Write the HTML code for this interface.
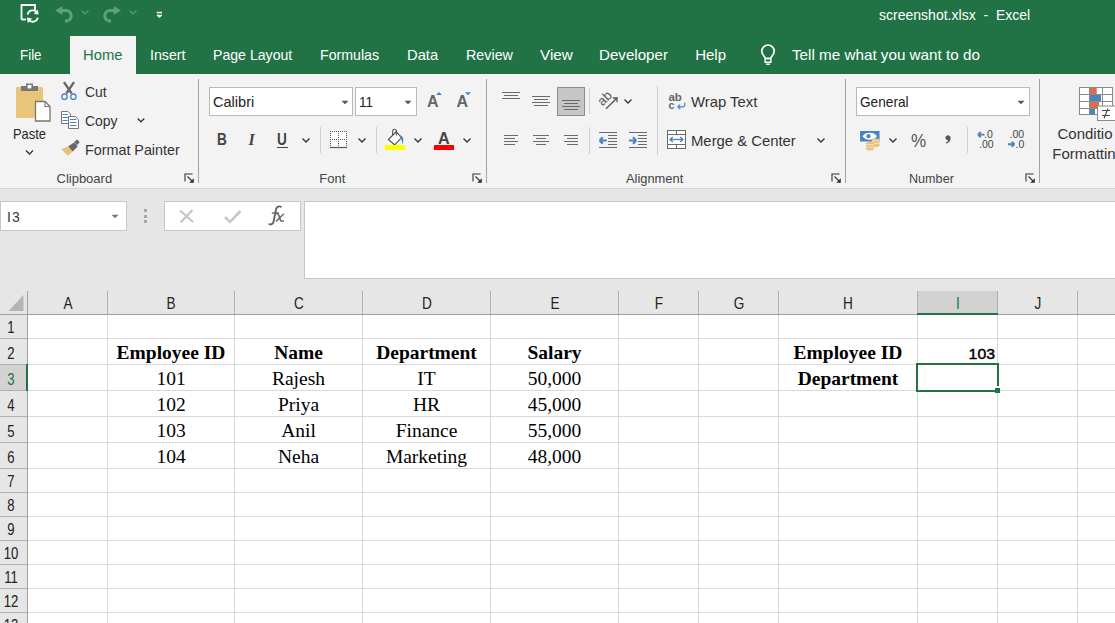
<!DOCTYPE html>
<html><head><meta charset="utf-8"><style>
html,body{margin:0;padding:0;}
body{width:1115px;height:623px;overflow:hidden;position:relative;background:#fff;font-family:"Liberation Sans",sans-serif;}
.t{position:absolute;white-space:nowrap;}
.r{position:absolute;}
svg.r{overflow:visible;}
</style></head><body>
<div class="r" style="left:0px;top:0px;width:1115px;height:74px;background:#217346"></div>
<svg class="r" style="left:18px;top:2px" width="24" height="22" viewBox="0 0 24 22">
<path d="M3.5 17.5 V3 H17 V8" fill="none" stroke="#fff" stroke-width="1.8"/>
<path d="M3.5 17.5 H8" fill="none" stroke="#fff" stroke-width="1.8"/>
<path d="M9.6 12.6 A5.2 5.2 0 0 1 19.2 11" fill="none" stroke="#fff" stroke-width="1.8"/>
<path d="M19.8 7.5 L20.6 12.6 L15.8 12" fill="#fff"/>
<path d="M19.8 15.6 A5.2 5.2 0 0 1 10.4 17.4" fill="none" stroke="#fff" stroke-width="1.8"/>
<path d="M9.8 21.2 L9 15.6 L14 16.4" fill="#fff"/>
</svg>
<svg class="r" style="left:54px;top:4px" width="22" height="20" viewBox="0 0 22 20">
<path d="M7.5 6.4 H12 A5.3 5.3 0 0 1 12 17 H11" fill="none" stroke="#5fa07a" stroke-width="3"/>
<path d="M1.2 6.4 L8.4 1.9 L8.4 10.9 Z" fill="#5fa07a"/>
</svg>
<svg class="r" style="left:80px;top:8px" width="10" height="8" viewBox="0 0 10 8"><path d="M1.5 2.5 L5 6 L8.5 2.5" fill="none" stroke="#5c9c76" stroke-width="1.1"/></svg>
<svg class="r" style="left:101px;top:4px" width="22" height="20" viewBox="0 0 22 20">
<path d="M13.5 6.4 H9 A5.3 5.3 0 0 0 9 17 H10" fill="none" stroke="#5fa07a" stroke-width="3"/>
<path d="M20 6.4 L12.8 1.9 L12.8 10.9 Z" fill="#5fa07a"/>
</svg>
<svg class="r" style="left:128px;top:8px" width="10" height="8" viewBox="0 0 10 8"><path d="M1.5 2.5 L5 6 L8.5 2.5" fill="none" stroke="#5c9c76" stroke-width="1.1"/></svg>
<svg class="r" style="left:155px;top:10px" width="9" height="10" viewBox="0 0 9 10"><rect x="1.8" y="1.8" width="5.2" height="1.5" fill="#fff"/><path d="M1.8 4.7 H7 V5.5 L4.4 8 L1.8 5.5 Z" fill="#fff"/></svg>
<div class="t" style="left:878.5px;top:7.30px;font-size:15px;line-height:15px;color:#fff;font-family:'Liberation Sans', sans-serif;font-weight:normal;transform:scaleX(0.935);transform-origin:0 0;">screenshot.xlsx&nbsp;&nbsp;-&nbsp;&nbsp;Excel</div>
<div class="r" style="left:70px;top:36px;width:66px;height:38px;background:#f3f3f3"></div>
<div class="t" style="left:19.6px;top:47.30px;font-size:15px;line-height:15px;color:#ffffff;font-family:'Liberation Sans', sans-serif;font-weight:normal;transform:scaleX(0.892);transform-origin:0 0;">File</div>
<div class="t" style="left:82.6px;top:47.30px;font-size:15px;line-height:15px;color:#217346;font-family:'Liberation Sans', sans-serif;font-weight:normal;transform:scaleX(0.985);transform-origin:0 0;">Home</div>
<div class="t" style="left:150px;top:47.30px;font-size:15px;line-height:15px;color:#ffffff;font-family:'Liberation Sans', sans-serif;font-weight:normal;transform:scaleX(0.947);transform-origin:0 0;">Insert</div>
<div class="t" style="left:213px;top:47.30px;font-size:15px;line-height:15px;color:#ffffff;font-family:'Liberation Sans', sans-serif;font-weight:normal;transform:scaleX(0.941);transform-origin:0 0;">Page Layout</div>
<div class="t" style="left:320.2px;top:47.30px;font-size:15px;line-height:15px;color:#ffffff;font-family:'Liberation Sans', sans-serif;font-weight:normal;transform:scaleX(0.944);transform-origin:0 0;">Formulas</div>
<div class="t" style="left:407.4px;top:47.30px;font-size:15px;line-height:15px;color:#ffffff;font-family:'Liberation Sans', sans-serif;font-weight:normal;transform:scaleX(0.981);transform-origin:0 0;">Data</div>
<div class="t" style="left:466.4px;top:47.30px;font-size:15px;line-height:15px;color:#ffffff;font-family:'Liberation Sans', sans-serif;font-weight:normal;transform:scaleX(0.955);transform-origin:0 0;">Review</div>
<div class="t" style="left:540px;top:47.30px;font-size:15px;line-height:15px;color:#ffffff;font-family:'Liberation Sans', sans-serif;font-weight:normal;transform:scaleX(1.019);transform-origin:0 0;">View</div>
<div class="t" style="left:599.4px;top:47.30px;font-size:15px;line-height:15px;color:#ffffff;font-family:'Liberation Sans', sans-serif;font-weight:normal;transform:scaleX(1.009);transform-origin:0 0;">Developer</div>
<div class="t" style="left:695.2px;top:47.30px;font-size:15px;line-height:15px;color:#ffffff;font-family:'Liberation Sans', sans-serif;font-weight:normal;">Help</div>
<div class="t" style="left:792.4px;top:47.30px;font-size:15px;line-height:15px;color:#ffffff;font-family:'Liberation Sans', sans-serif;font-weight:normal;transform:scaleX(1.015);transform-origin:0 0;">Tell me what you want to do</div>
<svg class="r" style="left:758px;top:42px" width="22" height="26" viewBox="0 0 22 26">
<path d="M7.5 16.5 C6.5 14 3.8 12.5 3.8 9.2 A6.2 6.2 0 0 1 16.2 9.2 C16.2 12.5 13.5 14 12.5 16.5 Z" fill="none" stroke="#fff" stroke-width="1.7"/>
<rect x="7.2" y="16.5" width="5.6" height="3.8" fill="none" stroke="#fff" stroke-width="1.5"/>
<rect x="8" y="21.6" width="4" height="1.4" fill="#fff"/>
</svg>
<div class="r" style="left:0px;top:74px;width:1115px;height:114px;background:#f3f3f3"></div>
<div class="r" style="left:0px;top:188px;width:1115px;height:1px;background:#d6d6d6"></div>
<div class="r" style="left:198px;top:79px;width:1px;height:104px;background:#a3a3a3"></div>
<div class="r" style="left:486px;top:79px;width:1px;height:104px;background:#a3a3a3"></div>
<div class="r" style="left:845px;top:79px;width:1px;height:104px;background:#a3a3a3"></div>
<div class="r" style="left:1039px;top:79px;width:1px;height:104px;background:#a3a3a3"></div>
<svg class="r" style="left:13px;top:80px" width="40" height="44" viewBox="0 0 40 44">
<rect x="3" y="7" width="27" height="31" rx="1.5" fill="#ebc47c"/>
<path d="M8 11 V6 H13 V3.5 H20 V6 H25 V11 Z" fill="#777"/>
<rect x="14.6" y="5" width="3.8" height="3.4" fill="#fff"/>
<path d="M22.5 21.5 H32 L37 26.5 V41 H22.5 Z" fill="#fff" stroke="#777" stroke-width="1.3"/>
<path d="M32 21.5 V26.5 H37" fill="none" stroke="#777" stroke-width="1.1"/>
</svg>
<div class="t" style="left:13.3px;top:126.30px;font-size:15px;line-height:15px;color:#262626;font-family:'Liberation Sans', sans-serif;font-weight:normal;transform:scaleX(0.86);transform-origin:0 0;">Paste</div>
<svg class="r" style="left:24px;top:148px" width="11" height="9" viewBox="0 0 11 9"><path d="M2 2.5 L5.5 6 L9 2.5" fill="none" stroke="#333" stroke-width="1.3"/></svg>
<svg class="r" style="left:59px;top:80px" width="20" height="22" viewBox="0 0 20 22">
<path d="M5 2.2 L12.6 13.4 M15 2.2 L7.4 13.4" stroke="#666" stroke-width="2.4" fill="none"/>
<circle cx="5.5" cy="16.7" r="2.7" fill="none" stroke="#4a82c3" stroke-width="1.3"/>
<circle cx="14.4" cy="16.7" r="2.7" fill="none" stroke="#4a82c3" stroke-width="1.3"/>
</svg>
<div class="t" style="left:84.5px;top:84.30px;font-size:15px;line-height:15px;color:#333;font-family:'Liberation Sans', sans-serif;font-weight:normal;transform:scaleX(0.93);transform-origin:0 0;">Cut</div>
<svg class="r" style="left:59px;top:109px" width="22" height="22" viewBox="0 0 22 22">
<path d="M2.5 2.5 H9 L11.5 5 V14.5 H2.5 Z" fill="#fff" stroke="#777" stroke-width="1"/>
<path d="M3.5 5.5 H9 M3.5 8.5 H9 M3.5 11.5 H8.5" stroke="#4a82c3" stroke-width="1"/>
<path d="M9.5 7.5 H16.5 L19.5 10.5 V19.5 H9.5 Z" fill="#fff" stroke="#777" stroke-width="1"/>
<path d="M11 10.5 H17.5 M11 13.5 H17.5 M11 16.5 H17.5" stroke="#4a82c3" stroke-width="1"/>
</svg>
<div class="t" style="left:84.5px;top:113.10px;font-size:15px;line-height:15px;color:#333;font-family:'Liberation Sans', sans-serif;font-weight:normal;transform:scaleX(0.93);transform-origin:0 0;">Copy</div>
<svg class="r" style="left:136px;top:116px" width="10" height="9" viewBox="0 0 10 9"><path d="M1.7 2.5 L5 5.8 L8.3 2.5" fill="none" stroke="#333" stroke-width="1.3"/></svg>
<svg class="r" style="left:59px;top:139px" width="22" height="20" viewBox="0 0 22 20">
<path d="M2.3 10.2 L9.8 7 L14 12.3 L8.8 16.8 Z" fill="#e9c07a"/>
<path d="M9.3 7.2 L15.5 3.3 L18.6 7.6 L13.6 12.4 Z" fill="#686868"/>
<path d="M15.2 2.6 L18.6 0.6 L20.6 3.2 L18 6.2 Z" fill="#686868"/>
</svg>
<div class="t" style="left:84.5px;top:142.00px;font-size:15px;line-height:15px;color:#333;font-family:'Liberation Sans', sans-serif;font-weight:normal;transform:scaleX(0.955);transform-origin:0 0;">Format Painter</div>
<div class="t" style="left:56.5px;top:172.00px;font-size:13px;line-height:13px;color:#444;font-family:'Liberation Sans', sans-serif;font-weight:normal;">Clipboard</div>
<svg class="r" style="left:183.5px;top:172.5px" width="11" height="11" viewBox="0 0 11 11"><path d="M1 8.5 V1 H8.5" fill="none" stroke="#333" stroke-width="1.1"/><path d="M3.5 3.5 L9 9" stroke="#333" stroke-width="1.1"/><path d="M9.8 5.2 V9.8 H5.2 Z" fill="#333"/></svg>
<div class="r" style="left:209px;top:87px;width:144px;height:29px;background:#fff;border:1px solid #b9b9b9;box-sizing:border-box"></div>
<div class="t" style="left:212.6px;top:94.00px;font-size:15px;line-height:15px;color:#222;font-family:'Liberation Sans', sans-serif;font-weight:normal;transform:scaleX(0.97);transform-origin:0 0;">Calibri</div>
<svg class="r" style="left:340.5px;top:99.5px" width="8" height="5" viewBox="0 0 8 5"><path d="M0.5 0.8 H7.5 L4 4.3 Z" fill="#555"/></svg>
<div class="r" style="left:355px;top:87px;width:62px;height:29px;background:#fff;border:1px solid #b9b9b9;box-sizing:border-box"></div>
<div class="t" style="left:359.4px;top:94.00px;font-size:15px;line-height:15px;color:#222;font-family:'Liberation Sans', sans-serif;font-weight:normal;transform:scaleX(0.9);transform-origin:0 0;">11</div>
<svg class="r" style="left:404px;top:99.5px" width="8" height="5" viewBox="0 0 8 5"><path d="M0.5 0.8 H7.5 L4 4.3 Z" fill="#555"/></svg>
<svg class="r" style="left:426px;top:90px" width="16" height="20" viewBox="0 0 16 20"><text x="1" y="16.8" font-family="Liberation Sans" font-size="16" font-weight="bold" fill="#666">A</text><path d="M10 5 L13 2 L16 5 Z" fill="#4a82c3"/></svg>
<svg class="r" style="left:455px;top:90px" width="16" height="20" viewBox="0 0 16 20"><text x="1.5" y="16.8" font-family="Liberation Sans" font-size="16" font-weight="bold" fill="#666">A</text><path d="M10 2.2 H16 L13 5.2 Z" fill="#4a82c3"/></svg>
<div class="t" style="left:217.3px;top:132.46px;font-size:16px;line-height:16px;color:#444;font-family:'Liberation Sans', sans-serif;font-weight:bold;transform:scaleX(0.85);transform-origin:0 0;">B</div>
<div class="t" style="left:248.5px;top:132.46px;font-size:16px;line-height:16px;color:#444;font-family:'Liberation Sans', sans-serif;font-weight:bold;font-family:'Liberation Serif',serif;"><i>I</i></div>
<div class="t" style="left:277px;top:132.46px;font-size:16px;line-height:16px;color:#444;font-family:'Liberation Sans', sans-serif;font-weight:bold;transform:scaleX(0.85);transform-origin:0 0;">U</div>
<div class="r" style="left:277px;top:147px;width:11px;height:1px;background:#444"></div>
<svg class="r" style="left:300.5px;top:136.5px" width="10" height="7" viewBox="0 0 10 7"><path d="M1.5 1.5 L5 5 L8.5 1.5" fill="none" stroke="#333" stroke-width="1.3"/></svg>
<div class="r" style="left:320px;top:127px;width:1px;height:26px;background:#d0d0d0"></div>
<svg class="r" style="left:329px;top:130px" width="20" height="20" viewBox="0 0 20 20">
<rect x="1.5" y="1.5" width="16" height="15.5" fill="#fff"/>
<path d="M1.5 1 V17 M17.5 1 V17 M9.5 1 V17 M1 1.5 H18 M1 9.5 H18" fill="none" stroke="#555" stroke-width="1" stroke-dasharray="1 1" shape-rendering="crispEdges"/>
<path d="M1 17.5 H18" stroke="#555" stroke-width="1.2"/>
</svg>
<svg class="r" style="left:356.5px;top:136.5px" width="10" height="7" viewBox="0 0 10 7"><path d="M1.5 1.5 L5 5 L8.5 1.5" fill="none" stroke="#333" stroke-width="1.3"/></svg>
<div class="r" style="left:376px;top:127px;width:1px;height:26px;background:#d0d0d0"></div>
<svg class="r" style="left:384px;top:127px" width="24" height="24" viewBox="0 0 24 24">
<path d="M4.4 12.5 L10.6 17.8 L17.6 10.6 L12.3 4.8 Z" fill="#fff" stroke="#555" stroke-width="1.2" stroke-linejoin="round"/>
<path d="M8.6 8 V4.2 A1.9 1.9 0 0 1 12.4 4.2 V8.5" fill="none" stroke="#555" stroke-width="1.1"/>
<path d="M15.2 8.2 C18.8 8.4 20.6 11.5 18.4 17.4 L17.4 12 Z" fill="#4a82c3"/>
<rect x="1" y="18" width="20" height="5" fill="#ffff00"/>
</svg>
<svg class="r" style="left:413px;top:136.5px" width="10" height="7" viewBox="0 0 10 7"><path d="M1.5 1.5 L5 5 L8.5 1.5" fill="none" stroke="#333" stroke-width="1.3"/></svg>
<div class="t" style="left:438px;top:129.61px;font-size:17px;line-height:17px;color:#444;font-family:'Liberation Sans', sans-serif;font-weight:bold;transform:scaleX(0.95);transform-origin:0 0;">A</div>
<div class="r" style="left:434px;top:145px;width:20px;height:5px;background:#ff0000"></div>
<svg class="r" style="left:461.5px;top:136.5px" width="10" height="7" viewBox="0 0 10 7"><path d="M1.5 1.5 L5 5 L8.5 1.5" fill="none" stroke="#333" stroke-width="1.3"/></svg>
<div class="t" style="left:319.3px;top:172.00px;font-size:13px;line-height:13px;color:#444;font-family:'Liberation Sans', sans-serif;font-weight:normal;">Font</div>
<svg class="r" style="left:472px;top:172.5px" width="11" height="11" viewBox="0 0 11 11"><path d="M1 8.5 V1 H8.5" fill="none" stroke="#333" stroke-width="1.1"/><path d="M3.5 3.5 L9 9" stroke="#333" stroke-width="1.1"/><path d="M9.8 5.2 V9.8 H5.2 Z" fill="#333"/></svg>
<div class="r" style="left:502px;top:92px;width:18px;height:1px;background:#6a6a6a"></div>
<div class="r" style="left:504px;top:95px;width:14px;height:1px;background:#6a6a6a"></div>
<div class="r" style="left:502px;top:98px;width:18px;height:1px;background:#6a6a6a"></div>
<div class="r" style="left:532px;top:96px;width:18px;height:1px;background:#6a6a6a"></div>
<div class="r" style="left:534px;top:99px;width:14px;height:1px;background:#6a6a6a"></div>
<div class="r" style="left:532px;top:102px;width:18px;height:1px;background:#6a6a6a"></div>
<div class="r" style="left:534px;top:105px;width:14px;height:1px;background:#6a6a6a"></div>
<div class="r" style="left:557px;top:87px;width:28px;height:29px;background:#c6c6c6;border:1px solid #8c8c8c;box-sizing:border-box"></div>
<div class="r" style="left:562px;top:100px;width:18px;height:1px;background:#6a6a6a"></div>
<div class="r" style="left:564px;top:103px;width:14px;height:1px;background:#6a6a6a"></div>
<div class="r" style="left:562px;top:106px;width:18px;height:1px;background:#6a6a6a"></div>
<div class="r" style="left:564px;top:109px;width:14px;height:1px;background:#6a6a6a"></div>
<div class="r" style="left:589px;top:88px;width:1px;height:26px;background:#d0d0d0"></div>
<svg class="r" style="left:596px;top:90px" width="24" height="21" viewBox="0 0 24 21">
<text x="0" y="0" font-family="Liberation Sans" font-size="13" fill="#5a5a5a" transform="translate(6.6,16.4) rotate(-45)">ab</text>
<path d="M10 18.8 L21 8" stroke="#555" stroke-width="1.3"/>
<path d="M16.8 8 H21 V12.2" fill="none" stroke="#555" stroke-width="1.3"/>
</svg>
<svg class="r" style="left:622.5px;top:97.5px" width="10" height="7" viewBox="0 0 10 7"><path d="M1.5 1.5 L5 5 L8.5 1.5" fill="none" stroke="#333" stroke-width="1.3"/></svg>
<div class="r" style="left:504px;top:135px;width:14px;height:1px;background:#6a6a6a"></div>
<div class="r" style="left:504px;top:138px;width:11px;height:1px;background:#6a6a6a"></div>
<div class="r" style="left:504px;top:141px;width:14px;height:1px;background:#6a6a6a"></div>
<div class="r" style="left:504px;top:144px;width:11px;height:1px;background:#6a6a6a"></div>
<div class="r" style="left:533px;top:135px;width:16px;height:1px;background:#6a6a6a"></div>
<div class="r" style="left:536px;top:138px;width:10px;height:1px;background:#6a6a6a"></div>
<div class="r" style="left:533px;top:141px;width:16px;height:1px;background:#6a6a6a"></div>
<div class="r" style="left:536px;top:144px;width:10px;height:1px;background:#6a6a6a"></div>
<div class="r" style="left:564px;top:135px;width:14px;height:1px;background:#6a6a6a"></div>
<div class="r" style="left:567px;top:138px;width:11px;height:1px;background:#6a6a6a"></div>
<div class="r" style="left:564px;top:141px;width:14px;height:1px;background:#6a6a6a"></div>
<div class="r" style="left:567px;top:144px;width:11px;height:1px;background:#6a6a6a"></div>
<div class="r" style="left:589px;top:127px;width:1px;height:27px;background:#d0d0d0"></div>
<div class="r" style="left:599px;top:132px;width:18px;height:1px;background:#6a6a6a"></div>
<div class="r" style="left:608px;top:135px;width:9px;height:1px;background:#6a6a6a"></div>
<div class="r" style="left:608px;top:138px;width:9px;height:1px;background:#6a6a6a"></div>
<div class="r" style="left:608px;top:141px;width:9px;height:1px;background:#6a6a6a"></div>
<div class="r" style="left:608px;top:144px;width:9px;height:1px;background:#6a6a6a"></div>
<div class="r" style="left:599px;top:147px;width:18px;height:1px;background:#6a6a6a"></div>
<svg class="r" style="left:598px;top:136px" width="10" height="9" viewBox="0 0 10 9"><path d="M1.6 4.5 H8.8 M1.6 4.5 L4.8 1.3 M1.6 4.5 L4.8 7.7" stroke="#4a82c3" stroke-width="2.2" fill="none"/></svg>
<div class="r" style="left:629px;top:132px;width:18px;height:1px;background:#6a6a6a"></div>
<div class="r" style="left:638px;top:135px;width:9px;height:1px;background:#6a6a6a"></div>
<div class="r" style="left:638px;top:138px;width:9px;height:1px;background:#6a6a6a"></div>
<div class="r" style="left:638px;top:141px;width:9px;height:1px;background:#6a6a6a"></div>
<div class="r" style="left:638px;top:144px;width:9px;height:1px;background:#6a6a6a"></div>
<div class="r" style="left:629px;top:147px;width:18px;height:1px;background:#6a6a6a"></div>
<svg class="r" style="left:628px;top:136px" width="10" height="9" viewBox="0 0 10 9"><path d="M1 4.5 H8.2 M8.2 4.5 L5 1.3 M8.2 4.5 L5 7.7" stroke="#4a82c3" stroke-width="2.2" fill="none"/></svg>
<div class="r" style="left:657px;top:86px;width:1px;height:69px;background:#d0d0d0"></div>
<svg class="r" style="left:668px;top:92px" width="20" height="18" viewBox="0 0 20 18">
<text x="0.6" y="8.6" font-family="Liberation Sans" font-size="11.5" font-weight="bold" fill="#666" letter-spacing="-0.2">ab</text>
<text x="0.6" y="16.6" font-family="Liberation Sans" font-size="10.5" font-weight="bold" fill="#666">c</text>
<path d="M16.8 10.6 V12.6 A2.2 2.2 0 0 1 14.6 14.8 H10" fill="none" stroke="#4a82c3" stroke-width="1.2"/>
<path d="M12.2 12.6 L9.8 14.8 L12.2 17" fill="none" stroke="#4a82c3" stroke-width="1.2"/>
</svg>
<div class="t" style="left:690.9px;top:94.00px;font-size:15px;line-height:15px;color:#333;font-family:'Liberation Sans', sans-serif;font-weight:normal;transform:scaleX(0.99);transform-origin:0 0;">Wrap Text</div>
<svg class="r" style="left:666px;top:129px" width="22" height="21" viewBox="0 0 22 21">
<rect x="1.5" y="1.5" width="18" height="18" fill="#fff" stroke="#6a6a6a" stroke-width="1"/>
<path d="M1.5 5.5 H19.5 M1.5 15.5 H19.5 M10.5 1.5 V5.5 M10.5 15.5 V19.5" stroke="#6a6a6a" stroke-width="1"/>
<path d="M4.2 10.5 H16.8" stroke="#4a82c3" stroke-width="1.3"/>
<path d="M6.8 8 L4.2 10.5 L6.8 13 M14.2 8 L16.8 10.5 L14.2 13" fill="none" stroke="#4a82c3" stroke-width="1.5"/>
</svg>
<div class="t" style="left:691.4px;top:133.30px;font-size:15px;line-height:15px;color:#333;font-family:'Liberation Sans', sans-serif;font-weight:normal;transform:scaleX(0.99);transform-origin:0 0;">Merge &amp; Center</div>
<svg class="r" style="left:815.5px;top:136.5px" width="10" height="7" viewBox="0 0 10 7"><path d="M1.5 1.5 L5 5 L8.5 1.5" fill="none" stroke="#333" stroke-width="1.3"/></svg>
<div class="t" style="left:626.4px;top:172.00px;font-size:13px;line-height:13px;color:#444;font-family:'Liberation Sans', sans-serif;font-weight:normal;transform:scaleX(0.99);transform-origin:0 0;">Alignment</div>
<svg class="r" style="left:831px;top:172.5px" width="11" height="11" viewBox="0 0 11 11"><path d="M1 8.5 V1 H8.5" fill="none" stroke="#333" stroke-width="1.1"/><path d="M3.5 3.5 L9 9" stroke="#333" stroke-width="1.1"/><path d="M9.8 5.2 V9.8 H5.2 Z" fill="#333"/></svg>
<div class="r" style="left:856px;top:87px;width:174px;height:29px;background:#fff;border:1px solid #b9b9b9;box-sizing:border-box"></div>
<div class="t" style="left:859.7px;top:94.00px;font-size:15px;line-height:15px;color:#222;font-family:'Liberation Sans', sans-serif;font-weight:normal;transform:scaleX(0.91);transform-origin:0 0;">General</div>
<svg class="r" style="left:1017px;top:99.5px" width="8" height="5" viewBox="0 0 8 5"><path d="M0.5 0.8 H7.5 L4 4.3 Z" fill="#555"/></svg>
<svg class="r" style="left:858px;top:129px" width="24" height="23" viewBox="0 0 24 23">
<rect x="2" y="2" width="19.5" height="10.5" fill="#4a82c3"/>
<path d="M4.5 7.2 Q7 3.8 11.8 3.8 Q16.5 3.8 19 7.2 Q16.5 10.7 11.8 10.7 Q7 10.7 4.5 7.2 Z" fill="#fff"/>
<circle cx="10.5" cy="7.2" r="2.1" fill="#4a82c3"/>
<rect x="14" y="9.5" width="7.5" height="8.5" rx="2" fill="#ebc17c"/>
<path d="M14 12 H21.5 M14 14.5 H21.5" stroke="#f8e6c4" stroke-width="0.9"/>
<rect x="8" y="13" width="8" height="8.5" rx="2" fill="#ebc17c"/>
<path d="M8 15.6 H16 M8 18.2 H16" stroke="#f8e6c4" stroke-width="0.9"/>
</svg>
<svg class="r" style="left:887.5px;top:136.5px" width="10" height="7" viewBox="0 0 10 7"><path d="M1.5 1.5 L5 5 L8.5 1.5" fill="none" stroke="#333" stroke-width="1.3"/></svg>
<div class="t" style="left:911px;top:131.76px;font-size:18px;line-height:18px;color:#555;font-family:'Liberation Sans', sans-serif;font-weight:normal;transform:scaleX(0.95);transform-origin:0 0;">%</div>
<svg class="r" style="left:943px;top:133px" width="10" height="12" viewBox="0 0 10 12"><path d="M4.2 2.5 A2.6 2.6 0 0 1 7.6 5.2 C7.6 7.8 6 9.6 3.2 10.6 L2.7 9.6 C4.3 8.8 5 7.8 5.1 6.9 A2.2 2.2 0 0 1 4.2 2.5 Z" fill="#555"/></svg>
<div class="r" style="left:967px;top:127px;width:1px;height:26px;background:#d0d0d0"></div>
<svg class="r" style="left:976px;top:130px" width="20" height="20" viewBox="0 0 20 20">
<path d="M2 4.6 H8.5 M2 4.6 L4.8 2 M2 4.6 L4.8 7.2" stroke="#4a82c3" stroke-width="1.9" fill="none"/>
<text x="8" y="8.2" font-family="Liberation Sans" font-size="10.5" fill="#444">.0</text>
<text x="3" y="18.2" font-family="Liberation Sans" font-size="10.5" fill="#444">.00</text>
</svg>
<svg class="r" style="left:1006px;top:130px" width="20" height="20" viewBox="0 0 20 20">
<text x="3.5" y="8.2" font-family="Liberation Sans" font-size="10.5" fill="#444">.00</text>
<path d="M2 14.2 H8.5 M8.5 14.2 L5.7 11.6 M8.5 14.2 L5.7 16.8" stroke="#4a82c3" stroke-width="1.9" fill="none"/>
<text x="9.5" y="18.2" font-family="Liberation Sans" font-size="10.5" fill="#444">.0</text>
</svg>
<div class="t" style="left:908.6px;top:172.00px;font-size:13px;line-height:13px;color:#444;font-family:'Liberation Sans', sans-serif;font-weight:normal;transform:scaleX(0.97);transform-origin:0 0;">Number</div>
<svg class="r" style="left:1025px;top:172.5px" width="11" height="11" viewBox="0 0 11 11"><path d="M1 8.5 V1 H8.5" fill="none" stroke="#333" stroke-width="1.1"/><path d="M3.5 3.5 L9 9" stroke="#333" stroke-width="1.1"/><path d="M9.8 5.2 V9.8 H5.2 Z" fill="#333"/></svg>
<svg class="r" style="left:1078px;top:86px" width="40" height="36" viewBox="0 0 40 36">
<rect x="1.5" y="1.5" width="33" height="27" fill="#fff" stroke="#8a8a8a" stroke-width="1"/>
<rect x="11.5" y="2" width="7.2" height="6.5" fill="#e06c4a"/>
<rect x="11.5" y="8.5" width="11.5" height="7" fill="#4a82c3"/>
<rect x="11.5" y="15.5" width="9.5" height="7" fill="#e06c4a"/>
<rect x="11.5" y="22.5" width="5.5" height="6" fill="#4a82c3"/>
<path d="M1.5 8.5 H34.5 M1.5 15.5 H34.5 M1.5 22.5 H34.5 M11.5 1.5 V28.5 M24.5 1.5 V28.5" stroke="#8a8a8a" stroke-width="1"/>
<rect x="19.5" y="20" width="22" height="14.5" fill="#fff" stroke="#8a8a8a" stroke-width="1"/>
<path d="M24 24.5 H32 M24 29.5 H32 M26 32.5 L30 22.5" stroke="#444" stroke-width="1.1" fill="none"/>
</svg>
<div class="t" style="left:1057.5px;top:126.30px;font-size:15px;line-height:15px;color:#333;font-family:'Liberation Sans', sans-serif;font-weight:normal;width:55px;overflow:hidden;">Conditional</div>
<div class="t" style="left:1052.3px;top:146.00px;font-size:15px;line-height:15px;color:#333;font-family:'Liberation Sans', sans-serif;font-weight:normal;">Formatting</div>
<div class="r" style="left:0px;top:189px;width:1115px;height:102px;background:#e6e6e6"></div>
<div class="r" style="left:0px;top:201px;width:127px;height:30px;background:#fff;border:1px solid #c6c6c6;box-sizing:border-box"></div>
<div class="t" style="left:7px;top:208.88px;font-size:15.5px;line-height:15.5px;color:#333;font-family:'Liberation Sans', sans-serif;font-weight:normal;transform:scaleX(0.9);transform-origin:0 0;letter-spacing:1.3px;">I3</div>
<svg class="r" style="left:110.5px;top:213.5px" width="8" height="5" viewBox="0 0 8 5"><path d="M0.5 0.8 H7.5 L4 4.3 Z" fill="#777"/></svg>
<div class="r" style="left:144px;top:209px;width:3px;height:3px;background:#a6a6a6"></div>
<div class="r" style="left:144px;top:214.5px;width:3px;height:3px;background:#a6a6a6"></div>
<div class="r" style="left:144px;top:220px;width:3px;height:3px;background:#a6a6a6"></div>
<div class="r" style="left:164px;top:201px;width:137px;height:30px;background:#fff;border:1px solid #c6c6c6;box-sizing:border-box"></div>
<svg class="r" style="left:178px;top:208px" width="18" height="17" viewBox="0 0 18 17"><path d="M2 2.5 L15 14 M14.5 2 L2.5 14.5" stroke="#c4c4c4" stroke-width="1.9"/></svg>
<svg class="r" style="left:223px;top:208px" width="20" height="17" viewBox="0 0 20 17"><path d="M2 9 L7 14 L17.5 3" fill="none" stroke="#c8c8c8" stroke-width="2.6"/></svg>
<svg class="r" style="left:266px;top:204px" width="20" height="22" viewBox="0 0 20 22"><path d="M15.5 3.2 C13 1.5 10.6 2.6 10 5.5 L7.6 17.5 C7 20.2 5 21.2 2.6 19.8" fill="none" stroke="#666" stroke-width="1.9"/><path d="M5.8 9 H13" stroke="#666" stroke-width="1.4"/><path d="M9.5 9.8 C11.5 9 12.6 10 13.2 12.5 L14.3 15.8 C14.8 17.4 16.3 17.6 18 16.6" fill="none" stroke="#666" stroke-width="1.6"/><path d="M17.8 9.8 L10 17.4" stroke="#666" stroke-width="1.4"/></svg>
<div class="r" style="left:304px;top:201px;width:811px;height:78px;background:#fff;border:1px solid #c6c6c6;border-right:none;box-sizing:border-box"></div>
<div class="r" style="left:0px;top:315px;width:1115px;height:308px;background:#fff"></div>
<div class="r" style="left:0px;top:291px;width:1115px;height:23px;background:#e6e6e6"></div>
<div class="r" style="left:0px;top:315px;width:27px;height:308px;background:#e6e6e6"></div>
<div class="r" style="left:918px;top:291px;width:79px;height:23px;background:#d2d2d2"></div>
<div class="r" style="left:0px;top:365px;width:27px;height:25px;background:#d2d2d2"></div>
<div class="r" style="left:107px;top:315px;width:1px;height:308px;background:#d9d9d9"></div>
<div class="r" style="left:234px;top:315px;width:1px;height:308px;background:#d9d9d9"></div>
<div class="r" style="left:362px;top:315px;width:1px;height:308px;background:#d9d9d9"></div>
<div class="r" style="left:490px;top:315px;width:1px;height:308px;background:#d9d9d9"></div>
<div class="r" style="left:618px;top:315px;width:1px;height:308px;background:#d9d9d9"></div>
<div class="r" style="left:698px;top:315px;width:1px;height:308px;background:#d9d9d9"></div>
<div class="r" style="left:778px;top:315px;width:1px;height:308px;background:#d9d9d9"></div>
<div class="r" style="left:917px;top:315px;width:1px;height:308px;background:#d9d9d9"></div>
<div class="r" style="left:997px;top:315px;width:1px;height:308px;background:#d9d9d9"></div>
<div class="r" style="left:1077px;top:315px;width:1px;height:308px;background:#d9d9d9"></div>
<div class="r" style="left:1157px;top:315px;width:1px;height:308px;background:#d9d9d9"></div>
<div class="r" style="left:27px;top:338px;width:1088px;height:1px;background:#d9d9d9"></div>
<div class="r" style="left:27px;top:364px;width:1088px;height:1px;background:#d9d9d9"></div>
<div class="r" style="left:27px;top:390px;width:1088px;height:1px;background:#d9d9d9"></div>
<div class="r" style="left:27px;top:416px;width:1088px;height:1px;background:#d9d9d9"></div>
<div class="r" style="left:27px;top:442px;width:1088px;height:1px;background:#d9d9d9"></div>
<div class="r" style="left:27px;top:468px;width:1088px;height:1px;background:#d9d9d9"></div>
<div class="r" style="left:27px;top:492px;width:1088px;height:1px;background:#d9d9d9"></div>
<div class="r" style="left:27px;top:516px;width:1088px;height:1px;background:#d9d9d9"></div>
<div class="r" style="left:27px;top:540px;width:1088px;height:1px;background:#d9d9d9"></div>
<div class="r" style="left:27px;top:564px;width:1088px;height:1px;background:#d9d9d9"></div>
<div class="r" style="left:27px;top:588px;width:1088px;height:1px;background:#d9d9d9"></div>
<div class="r" style="left:27px;top:612px;width:1088px;height:1px;background:#d9d9d9"></div>
<div class="r" style="left:27px;top:636px;width:1088px;height:1px;background:#d9d9d9"></div>
<div class="r" style="left:0px;top:314px;width:1115px;height:1px;background:#9f9f9f"></div>
<div class="r" style="left:27px;top:291px;width:1px;height:332px;background:#9f9f9f"></div>
<div class="r" style="left:107px;top:291px;width:1px;height:23px;background:#b0b0b0"></div>
<div class="r" style="left:234px;top:291px;width:1px;height:23px;background:#b0b0b0"></div>
<div class="r" style="left:362px;top:291px;width:1px;height:23px;background:#b0b0b0"></div>
<div class="r" style="left:490px;top:291px;width:1px;height:23px;background:#b0b0b0"></div>
<div class="r" style="left:618px;top:291px;width:1px;height:23px;background:#b0b0b0"></div>
<div class="r" style="left:698px;top:291px;width:1px;height:23px;background:#b0b0b0"></div>
<div class="r" style="left:778px;top:291px;width:1px;height:23px;background:#b0b0b0"></div>
<div class="r" style="left:917px;top:291px;width:1px;height:23px;background:#b0b0b0"></div>
<div class="r" style="left:997px;top:291px;width:1px;height:23px;background:#b0b0b0"></div>
<div class="r" style="left:1077px;top:291px;width:1px;height:23px;background:#b0b0b0"></div>
<div class="r" style="left:1157px;top:291px;width:1px;height:23px;background:#b0b0b0"></div>
<div class="r" style="left:0px;top:338px;width:27px;height:1px;background:#b0b0b0"></div>
<div class="r" style="left:0px;top:364px;width:27px;height:1px;background:#b0b0b0"></div>
<div class="r" style="left:0px;top:390px;width:27px;height:1px;background:#b0b0b0"></div>
<div class="r" style="left:0px;top:416px;width:27px;height:1px;background:#b0b0b0"></div>
<div class="r" style="left:0px;top:442px;width:27px;height:1px;background:#b0b0b0"></div>
<div class="r" style="left:0px;top:468px;width:27px;height:1px;background:#b0b0b0"></div>
<div class="r" style="left:0px;top:492px;width:27px;height:1px;background:#b0b0b0"></div>
<div class="r" style="left:0px;top:516px;width:27px;height:1px;background:#b0b0b0"></div>
<div class="r" style="left:0px;top:540px;width:27px;height:1px;background:#b0b0b0"></div>
<div class="r" style="left:0px;top:564px;width:27px;height:1px;background:#b0b0b0"></div>
<div class="r" style="left:0px;top:588px;width:27px;height:1px;background:#b0b0b0"></div>
<div class="r" style="left:0px;top:612px;width:27px;height:1px;background:#b0b0b0"></div>
<div class="r" style="left:0px;top:636px;width:27px;height:1px;background:#b0b0b0"></div>
<div class="r" style="left:917px;top:313px;width:81px;height:2px;background:#217346"></div>
<div class="r" style="left:26px;top:364px;width:2px;height:27px;background:#217346"></div>
<svg class="r" style="left:8px;top:294px" width="17" height="18" viewBox="0 0 17 18"><path d="M15.5 1 V17 H0.5 Z" fill="#b4b4b4"/></svg>
<div class="t" style="left:-432.5px;width:1000px;text-align:center;top:296.46px;font-size:16px;line-height:16px;color:#222;font-family:'Liberation Sans', sans-serif;font-weight:normal;transform:scaleX(0.85);transform-origin:50% 0;">A</div>
<div class="t" style="left:-329.0px;width:1000px;text-align:center;top:296.46px;font-size:16px;line-height:16px;color:#222;font-family:'Liberation Sans', sans-serif;font-weight:normal;transform:scaleX(0.85);transform-origin:50% 0;">B</div>
<div class="t" style="left:-201.5px;width:1000px;text-align:center;top:296.46px;font-size:16px;line-height:16px;color:#222;font-family:'Liberation Sans', sans-serif;font-weight:normal;transform:scaleX(0.85);transform-origin:50% 0;">C</div>
<div class="t" style="left:-73.5px;width:1000px;text-align:center;top:296.46px;font-size:16px;line-height:16px;color:#222;font-family:'Liberation Sans', sans-serif;font-weight:normal;transform:scaleX(0.85);transform-origin:50% 0;">D</div>
<div class="t" style="left:54.5px;width:1000px;text-align:center;top:296.46px;font-size:16px;line-height:16px;color:#222;font-family:'Liberation Sans', sans-serif;font-weight:normal;transform:scaleX(0.85);transform-origin:50% 0;">E</div>
<div class="t" style="left:158.5px;width:1000px;text-align:center;top:296.46px;font-size:16px;line-height:16px;color:#222;font-family:'Liberation Sans', sans-serif;font-weight:normal;transform:scaleX(0.85);transform-origin:50% 0;">F</div>
<div class="t" style="left:238.5px;width:1000px;text-align:center;top:296.46px;font-size:16px;line-height:16px;color:#222;font-family:'Liberation Sans', sans-serif;font-weight:normal;transform:scaleX(0.85);transform-origin:50% 0;">G</div>
<div class="t" style="left:348.0px;width:1000px;text-align:center;top:296.46px;font-size:16px;line-height:16px;color:#222;font-family:'Liberation Sans', sans-serif;font-weight:normal;transform:scaleX(0.85);transform-origin:50% 0;">H</div>
<div class="t" style="left:457.5px;width:1000px;text-align:center;top:296.46px;font-size:16px;line-height:16px;color:#217346;font-family:'Liberation Sans', sans-serif;font-weight:normal;transform:scaleX(0.85);transform-origin:50% 0;">I</div>
<div class="t" style="left:537.5px;width:1000px;text-align:center;top:296.46px;font-size:16px;line-height:16px;color:#222;font-family:'Liberation Sans', sans-serif;font-weight:normal;transform:scaleX(0.85);transform-origin:50% 0;">J</div>
<div class="t" style="left:-489px;width:1000px;text-align:center;top:320.46px;font-size:16px;line-height:16px;color:#222;font-family:'Liberation Sans', sans-serif;font-weight:normal;transform:scaleX(0.82);transform-origin:50% 0;">1</div>
<div class="t" style="left:-489px;width:1000px;text-align:center;top:346.46px;font-size:16px;line-height:16px;color:#222;font-family:'Liberation Sans', sans-serif;font-weight:normal;transform:scaleX(0.82);transform-origin:50% 0;">2</div>
<div class="t" style="left:-489px;width:1000px;text-align:center;top:372.46px;font-size:16px;line-height:16px;color:#217346;font-family:'Liberation Sans', sans-serif;font-weight:normal;transform:scaleX(0.82);transform-origin:50% 0;">3</div>
<div class="t" style="left:-489px;width:1000px;text-align:center;top:398.46px;font-size:16px;line-height:16px;color:#222;font-family:'Liberation Sans', sans-serif;font-weight:normal;transform:scaleX(0.82);transform-origin:50% 0;">4</div>
<div class="t" style="left:-489px;width:1000px;text-align:center;top:424.46px;font-size:16px;line-height:16px;color:#222;font-family:'Liberation Sans', sans-serif;font-weight:normal;transform:scaleX(0.82);transform-origin:50% 0;">5</div>
<div class="t" style="left:-489px;width:1000px;text-align:center;top:450.46px;font-size:16px;line-height:16px;color:#222;font-family:'Liberation Sans', sans-serif;font-weight:normal;transform:scaleX(0.82);transform-origin:50% 0;">6</div>
<div class="t" style="left:-489px;width:1000px;text-align:center;top:474.46px;font-size:16px;line-height:16px;color:#222;font-family:'Liberation Sans', sans-serif;font-weight:normal;transform:scaleX(0.82);transform-origin:50% 0;">7</div>
<div class="t" style="left:-489px;width:1000px;text-align:center;top:498.46px;font-size:16px;line-height:16px;color:#222;font-family:'Liberation Sans', sans-serif;font-weight:normal;transform:scaleX(0.82);transform-origin:50% 0;">8</div>
<div class="t" style="left:-489px;width:1000px;text-align:center;top:522.46px;font-size:16px;line-height:16px;color:#222;font-family:'Liberation Sans', sans-serif;font-weight:normal;transform:scaleX(0.82);transform-origin:50% 0;">9</div>
<div class="t" style="left:-489px;width:1000px;text-align:center;top:546.46px;font-size:16px;line-height:16px;color:#222;font-family:'Liberation Sans', sans-serif;font-weight:normal;transform:scaleX(0.82);transform-origin:50% 0;">10</div>
<div class="t" style="left:-489px;width:1000px;text-align:center;top:570.46px;font-size:16px;line-height:16px;color:#222;font-family:'Liberation Sans', sans-serif;font-weight:normal;transform:scaleX(0.82);transform-origin:50% 0;">11</div>
<div class="t" style="left:-489px;width:1000px;text-align:center;top:594.46px;font-size:16px;line-height:16px;color:#222;font-family:'Liberation Sans', sans-serif;font-weight:normal;transform:scaleX(0.82);transform-origin:50% 0;">12</div>
<div class="t" style="left:-489px;width:1000px;text-align:center;top:618.46px;font-size:16px;line-height:16px;color:#222;font-family:'Liberation Sans', sans-serif;font-weight:normal;transform:scaleX(0.82);transform-origin:50% 0;">13</div>
<div class="t" style="left:-329.0px;width:1000px;text-align:center;top:342.67px;font-size:19.5px;line-height:19.5px;color:#000;font-family:'Liberation Serif', serif;font-weight:bold;">Employee ID</div>
<div class="t" style="left:-201.5px;width:1000px;text-align:center;top:342.67px;font-size:19.5px;line-height:19.5px;color:#000;font-family:'Liberation Serif', serif;font-weight:bold;">Name</div>
<div class="t" style="left:-73.5px;width:1000px;text-align:center;top:342.67px;font-size:19.5px;line-height:19.5px;color:#000;font-family:'Liberation Serif', serif;font-weight:bold;">Department</div>
<div class="t" style="left:54.5px;width:1000px;text-align:center;top:342.67px;font-size:19.5px;line-height:19.5px;color:#000;font-family:'Liberation Serif', serif;font-weight:bold;">Salary</div>
<div class="t" style="left:-329.0px;width:1000px;text-align:center;top:368.67px;font-size:19.5px;line-height:19.5px;color:#000;font-family:'Liberation Serif', serif;font-weight:normal;">101</div>
<div class="t" style="left:-201.5px;width:1000px;text-align:center;top:368.67px;font-size:19.5px;line-height:19.5px;color:#000;font-family:'Liberation Serif', serif;font-weight:normal;">Rajesh</div>
<div class="t" style="left:-73.5px;width:1000px;text-align:center;top:368.67px;font-size:19.5px;line-height:19.5px;color:#000;font-family:'Liberation Serif', serif;font-weight:normal;">IT</div>
<div class="t" style="left:54.5px;width:1000px;text-align:center;top:368.67px;font-size:19.5px;line-height:19.5px;color:#000;font-family:'Liberation Serif', serif;font-weight:normal;">50,000</div>
<div class="t" style="left:-329.0px;width:1000px;text-align:center;top:394.67px;font-size:19.5px;line-height:19.5px;color:#000;font-family:'Liberation Serif', serif;font-weight:normal;">102</div>
<div class="t" style="left:-201.5px;width:1000px;text-align:center;top:394.67px;font-size:19.5px;line-height:19.5px;color:#000;font-family:'Liberation Serif', serif;font-weight:normal;">Priya</div>
<div class="t" style="left:-73.5px;width:1000px;text-align:center;top:394.67px;font-size:19.5px;line-height:19.5px;color:#000;font-family:'Liberation Serif', serif;font-weight:normal;">HR</div>
<div class="t" style="left:54.5px;width:1000px;text-align:center;top:394.67px;font-size:19.5px;line-height:19.5px;color:#000;font-family:'Liberation Serif', serif;font-weight:normal;">45,000</div>
<div class="t" style="left:-329.0px;width:1000px;text-align:center;top:420.67px;font-size:19.5px;line-height:19.5px;color:#000;font-family:'Liberation Serif', serif;font-weight:normal;">103</div>
<div class="t" style="left:-201.5px;width:1000px;text-align:center;top:420.67px;font-size:19.5px;line-height:19.5px;color:#000;font-family:'Liberation Serif', serif;font-weight:normal;">Anil</div>
<div class="t" style="left:-73.5px;width:1000px;text-align:center;top:420.67px;font-size:19.5px;line-height:19.5px;color:#000;font-family:'Liberation Serif', serif;font-weight:normal;">Finance</div>
<div class="t" style="left:54.5px;width:1000px;text-align:center;top:420.67px;font-size:19.5px;line-height:19.5px;color:#000;font-family:'Liberation Serif', serif;font-weight:normal;">55,000</div>
<div class="t" style="left:-329.0px;width:1000px;text-align:center;top:446.67px;font-size:19.5px;line-height:19.5px;color:#000;font-family:'Liberation Serif', serif;font-weight:normal;">104</div>
<div class="t" style="left:-201.5px;width:1000px;text-align:center;top:446.67px;font-size:19.5px;line-height:19.5px;color:#000;font-family:'Liberation Serif', serif;font-weight:normal;">Neha</div>
<div class="t" style="left:-73.5px;width:1000px;text-align:center;top:446.67px;font-size:19.5px;line-height:19.5px;color:#000;font-family:'Liberation Serif', serif;font-weight:normal;">Marketing</div>
<div class="t" style="left:54.5px;width:1000px;text-align:center;top:446.67px;font-size:19.5px;line-height:19.5px;color:#000;font-family:'Liberation Serif', serif;font-weight:normal;">48,000</div>
<div class="t" style="left:348.0px;width:1000px;text-align:center;top:342.67px;font-size:19.5px;line-height:19.5px;color:#000;font-family:'Liberation Serif', serif;font-weight:bold;">Employee ID</div>
<div class="t" style="left:348.0px;width:1000px;text-align:center;top:368.67px;font-size:19.5px;line-height:19.5px;color:#000;font-family:'Liberation Serif', serif;font-weight:bold;">Department</div>
<div class="t" style="left:-5.5px;width:1000px;text-align:right;top:345.88px;font-size:15.5px;line-height:15.5px;color:#000;font-family:'Liberation Sans', sans-serif;font-weight:normal;transform:scaleX(1.02);transform-origin:100% 0;-webkit-text-stroke:0.45px #000;">103</div>
<div class="r" style="left:916px;top:363px;width:83px;height:29px;border:2px solid #217346;box-sizing:border-box;background:transparent"></div>
<div class="r" style="left:997px;top:386px;width:2px;height:2px;background:#fff"></div>
<div class="r" style="left:995px;top:388px;width:5px;height:5px;background:#217346"></div>
</body></html>
